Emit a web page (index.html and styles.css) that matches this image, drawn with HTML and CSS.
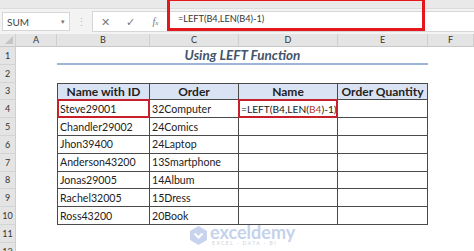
FILE: index.html
```html
<!DOCTYPE html>
<html lang="en">
<head>
    <meta charset="UTF-8">
    <title>Using LEFT Function</title>
    <link rel="stylesheet" href="styles.css">
</head>
<body>
    <!-- Formula bar -->
    <div class="topstrip"></div>
    <div class="formula-bar">
        <div class="name-box">
            <span>SUM</span>
            <span class="caret">&#9662;</span>
        </div>
        <div class="dots">&#8942;</div>
        <div class="fx-box">
            <span class="btn">&#10005;</span>
            <span class="btn">&#10003;</span>
            <span class="btn fx"><i>f</i><small>x</small></span>
            <div class="formula">=LEFT(B4,LEN(B4)-1)</div>
        </div>
    </div>

    <!-- Sheet -->
    <div class="sheet">
        <div class="corner"><svg width="8" height="8" viewBox="0 0 8 8"><path d="M8 0 L8 8 L0 8 Z" fill="#c4c4c4"/></svg></div>
        <div class="col-head">A</div>
        <div class="col-head">B</div>
        <div class="col-head">C</div>
        <div class="col-head">D</div>
        <div class="col-head">E</div>
        <div class="col-head">F</div>
        <div class="col-head last"></div>

        <div class="row-head">1</div>
        <div class="cell"></div>
        <div class="title">Using LEFT Function</div>
        <div class="cell span2"></div>

        <div class="row-head">2</div>
        <div class="cell span7"></div>

        <div class="row-head">3</div>
        <div class="cell"></div>
        <div class="tcell th">Name with ID</div>
        <div class="tcell th">Order</div>
        <div class="tcell th">Name</div>
        <div class="tcell th">Order Quantity</div>
        <div class="cell span2"></div>

        <div class="row-head">4</div>
        <div class="cell"></div>
        <div class="tcell mark">Steve29001</div>
        <div class="tcell">32Computer</div>
        <div class="tcell mark edit">=LEFT(B4,LEN(<span class="ref">B4</span>)-1)</div>
        <div class="tcell"></div>
        <div class="cell span2"></div>

        <div class="row-head">5</div>
        <div class="cell"></div>
        <div class="tcell">Chandler29002</div>
        <div class="tcell">24Comics</div>
        <div class="tcell"></div>
        <div class="tcell"></div>
        <div class="cell span2"></div>

        <div class="row-head">6</div>
        <div class="cell"></div>
        <div class="tcell">Jhon39400</div>
        <div class="tcell">24Laptop</div>
        <div class="tcell"></div>
        <div class="tcell"></div>
        <div class="cell span2"></div>

        <div class="row-head">7</div>
        <div class="cell"></div>
        <div class="tcell">Anderson43200</div>
        <div class="tcell">13Smartphone</div>
        <div class="tcell"></div>
        <div class="tcell"></div>
        <div class="cell span2"></div>

        <div class="row-head">8</div>
        <div class="cell"></div>
        <div class="tcell">Jonas29005</div>
        <div class="tcell">14Album</div>
        <div class="tcell"></div>
        <div class="tcell"></div>
        <div class="cell span2"></div>

        <div class="row-head">9</div>
        <div class="cell"></div>
        <div class="tcell">Rachel32005</div>
        <div class="tcell">15Dress</div>
        <div class="tcell"></div>
        <div class="tcell"></div>
        <div class="cell span2"></div>

        <div class="row-head">10</div>
        <div class="cell"></div>
        <div class="tcell">Ross43200</div>
        <div class="tcell">20Book</div>
        <div class="tcell"></div>
        <div class="tcell"></div>
        <div class="cell span2"></div>

        <div class="row-head">11</div>
        <div class="cell span7"></div>

        <div class="row-head">12</div>
        <div class="cell span7"></div>
    </div>

    <!-- watermark -->
    <div class="watermark">
        <svg width="17" height="19" viewBox="0 0 17 19">
            <path d="M8.5 0 L17 5 L17 14 L8.5 19 L0 14 L0 5 Z" fill="#bfcdea"/>
            <path d="M4.5 7.5 L8.5 11.5 L12.5 7.5" stroke="#ffffff" stroke-width="2" fill="none"/>
        </svg>
        <div class="wm-text">
            <div class="wm-big">exceldemy</div>
            <div class="wm-small">EXCEL · DATA · BI</div>
        </div>
    </div>
</body>
</html>
```

FILE: styles.css
```css
body {
    margin: 0;
    width: 474px;
    height: 251px;
    overflow: hidden;
    background: #ffffff;
    font-family: Lato, "Open Sans", sans-serif;
    position: relative;
}

.topstrip {
    height: 8px;
    background: #e9e9e9;
    border-bottom: 1px solid #dcdcdc;
}

/* Formula bar */
.formula-bar {
    display: flex;
    align-items: center;
    height: 25px;
    background: #f3f3f3;
    padding: 0 0 0 2px;
}

.name-box {
    width: 68px;
    height: 19px;
    background: #ffffff;
    border: 1px solid #d6d6d6;
    display: flex;
    align-items: center;
    justify-content: space-between;
    padding: 0 4px;
    box-sizing: border-box;
    font-size: 10px;
    color: #444;
}

.name-box .caret {
    font-size: 7px;
    color: #777;
}

.dots {
    width: 22px;
    text-align: center;
    color: #b5b5b5;
    font-size: 11px;
}

.fx-box {
    flex: 1;
    height: 19px;
    background: #ffffff;
    border: 1px solid #d6d6d6;
    border-right: none;
    display: flex;
    align-items: center;
    position: relative;
}

.btn {
    width: 25px;
    text-align: center;
    color: #7a7a7a;
    font-size: 11px;
}

.btn.fx {
    font-family: "Liberation Serif", serif;
    font-size: 10px;
    color: #777;
}

.btn.fx small {
    font-size: 7px;
    font-style: italic;
}

/* red highlight over the formula input */
.formula {
    position: absolute;
    left: 74px;
    top: -14px;
    width: 258px;
    height: 33px;
    border: 3px solid #e3171c;
    box-sizing: border-box;
    padding: 12px 0 0 8px;
    font-size: 9.2px;
    color: #333;
}

/* Sheet grid */
.sheet {
    display: grid;
    grid-template-columns: 16px 41px 93px 89px 99px 90px 46px 1fr;
    grid-template-rows: 13px repeat(12, 17.8px);
}

.corner {
    background: #e4e4e4;
    border-right: 1px solid #cfcfcf;
    border-bottom: 1px solid #c8c8c8;
    display: flex;
    align-items: flex-end;
    justify-content: flex-end;
    padding: 0 2px 2px 0;
}

.col-head {
    background: #e4e4e4;
    border-right: 1px solid #cfcfcf;
    border-bottom: 1px solid #c8c8c8;
    font-size: 9px;
    color: #333;
    text-align: center;
    line-height: 12px;
}

.col-head.last {
    border-right: none;
}

.row-head {
    background: #e4e4e4;
    border-right: 1px solid #cfcfcf;
    border-bottom: 1px solid #d4d4d4;
    font-size: 9px;
    color: #333;
    display: flex;
    align-items: center;
    justify-content: center;
    grid-column: 1;
}

.cell {
    background: #ffffff;
}

.span2 {
    grid-column: span 2;
}

.span7 {
    grid-column: span 7;
}

.title {
    grid-column: span 4;
    font-weight: bold;
    font-style: italic;
    font-size: 13.5px;
    color: #44546a;
    text-align: center;
    line-height: 16px;
    border-bottom: 2px solid #9fb4d9;
}

.tcell {
    border-right: 1px solid #4a4a4a;
    border-bottom: 1px solid #4a4a4a;
    font-size: 10.6px;
    color: #222;
    padding-left: 2px;
    display: flex;
    align-items: center;
    white-space: nowrap;
    position: relative;
}

.th {
    background: #dae3f3;
    border-top: 1px solid #4a4a4a;
    font-weight: bold;
    font-size: 12px;
    justify-content: center;
    padding-left: 0;
}

/* left border of the table */
.sheet > .cell + .tcell {
    border-left: 1px solid #4a4a4a;
}

.mark::before {
    content: "";
    position: absolute;
    left: -1px;
    top: -1px;
    right: -1px;
    bottom: -1px;
    border: 2px solid #c8202a;
}

.edit {
    font-size: 10.2px;
}

.ref {
    color: #b23b2e;
}

.watermark {
    position: absolute;
    left: 190px;
    top: 225px;
    display: flex;
    align-items: center;
    gap: 3px;
    opacity: 0.85;
}

.wm-big {
    font-size: 18px;
    color: #bccbe8;
    font-weight: bold;
    line-height: 15px;
}

.wm-small {
    font-size: 5px;
    color: #c3cbd8;
    letter-spacing: 1.5px;
    padding-left: 2px;
}
```
